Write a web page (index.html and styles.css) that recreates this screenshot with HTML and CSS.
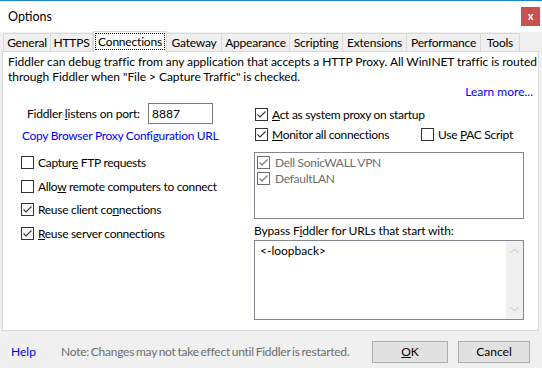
FILE: index.html
```html
<!DOCTYPE html>
<html>
<head>
    <title>Options</title>
    <link rel="stylesheet" href="styles.css">
</head>
<body>
<div class="window">
    <div class="titlebar">
        <span class="title">Options</span>
        <span class="close-btn">x</span>
    </div>

    <div class="tabs">
        <span class="tab">General</span>
        <span class="tab">HTTPS</span>
        <span class="tab active"><span class="focus">Connections</span></span>
        <span class="tab">Gateway</span>
        <span class="tab">Appearance</span>
        <span class="tab">Scripting</span>
        <span class="tab">Extensions</span>
        <span class="tab">Performance</span>
        <span class="tab">Tools</span>
    </div>

    <div class="panel">
        <p class="intro">Fiddler can debug traffic from any application that accepts a HTTP Proxy. All WinINET traffic is routed<br>through Fiddler when "File &gt; Capture Traffic" is checked.</p>
        <div class="learn-row"><a class="link">Learn more...</a></div>

        <div class="columns">
            <div class="left-col">
                <div class="port-row">
                    <span>Fiddler <u>l</u>istens on port:</span>
                    <span class="port-input">8887</span>
                </div>
                <a class="link copy-link">Copy Browser Proxy Configuration URL</a>

                <div class="check-list">
                    <div class="check">
                        <svg class="box" width="13" height="13"><rect x="0.5" y="0.5" width="12" height="12" fill="#fff" stroke="#333"/></svg>
                        <span>Captur<u>e</u> FTP requests</span>
                    </div>
                    <div class="check">
                        <svg class="box" width="13" height="13"><rect x="0.5" y="0.5" width="12" height="12" fill="#fff" stroke="#333"/></svg>
                        <span>Allo<u>w</u> remote computers to connect</span>
                    </div>
                    <div class="check">
                        <svg class="box" width="13" height="13"><rect x="0.5" y="0.5" width="12" height="12" fill="#fff" stroke="#333"/><polyline points="2.5,6.5 5,9 10.5,3.5" fill="none" stroke="#333" stroke-width="1.1"/></svg>
                        <span>Reuse client co<u>n</u>nections</span>
                    </div>
                    <div class="check">
                        <svg class="box" width="13" height="13"><rect x="0.5" y="0.5" width="12" height="12" fill="#fff" stroke="#333"/><polyline points="2.5,6.5 5,9 10.5,3.5" fill="none" stroke="#333" stroke-width="1.1"/></svg>
                        <span><u>R</u>euse server connections</span>
                    </div>
                </div>
            </div>

            <div class="right-col">
                <div class="check act-row">
                    <svg class="box" width="13" height="13"><rect x="0.5" y="0.5" width="12" height="12" fill="#fff" stroke="#333"/><polyline points="2.5,6.5 5,9 10.5,3.5" fill="none" stroke="#333" stroke-width="1.1"/></svg>
                    <span><u>A</u>ct as system proxy on startup</span>
                </div>
                <div class="monitor-row">
                    <div class="check">
                        <svg class="box" width="13" height="13"><rect x="0.5" y="0.5" width="12" height="12" fill="#fff" stroke="#333"/><polyline points="2.5,6.5 5,9 10.5,3.5" fill="none" stroke="#333" stroke-width="1.1"/></svg>
                        <span><u>M</u>onitor all connections</span>
                    </div>
                    <div class="check">
                        <svg class="box" width="13" height="13"><rect x="0.5" y="0.5" width="12" height="12" fill="#fff" stroke="#333"/></svg>
                        <span>Use <u>P</u>AC Script</span>
                    </div>
                </div>

                <div class="conn-list">
                    <div class="check list-item">
                        <svg class="box" width="13" height="13"><rect x="0.5" y="0.5" width="12" height="12" fill="#fff" stroke="#6d6d6d"/><polyline points="2.5,6.5 5,9 10.5,3.5" fill="none" stroke="#6d6d6d" stroke-width="1.1"/></svg>
                        <span>Dell SonicWALL VPN</span>
                    </div>
                    <div class="check list-item">
                        <svg class="box" width="13" height="13"><rect x="0.5" y="0.5" width="12" height="12" fill="#fff" stroke="#6d6d6d"/><polyline points="2.5,6.5 5,9 10.5,3.5" fill="none" stroke="#6d6d6d" stroke-width="1.1"/></svg>
                        <span>DefaultLAN</span>
                    </div>
                </div>

                <div class="bypass-label">Bypass F<u>i</u>ddler for URLs that start with:</div>
                <div class="bypass-box">
                    <div class="bypass-text">&lt;-loopback&gt;</div>
                    <div class="scrollbar">
                        <svg width="9" height="6"><polyline points="0.5,5 4.5,1 8.5,5" fill="none" stroke="#c2c2c2"/></svg>
                        <svg width="9" height="6"><polyline points="0.5,1 4.5,5 8.5,1" fill="none" stroke="#c2c2c2"/></svg>
                    </div>
                </div>
            </div>
        </div>
    </div>

    <div class="footer">
        <a class="link help-link">Help</a>
        <span class="note">Note: Changes may not take effect until Fiddler is restarted.</span>
        <button class="btn ok-btn" type="button"><u>O</u>K</button>
        <button class="btn cancel-btn" type="button">Cancel</button>
    </div>
</div>
</body>
</html>
```

FILE: styles.css
```css
* {
    box-sizing: border-box;
}

body {
    margin: 0;
    width: 542px;
    height: 368px;
    overflow: hidden;
    background-color: #f0f0f0;
    font-family: Lato, "Noto Sans", sans-serif;
    font-size: 12px;
    color: #000;
}

.window {
    height: 368px;
    border-top: 1px solid #1883d7;
    display: flex;
    flex-direction: column;
}

.titlebar {
    height: 31px;
    background: white;
    display: flex;
    align-items: center;
    justify-content: space-between;
    padding: 0 2px 0 8px;
}

.title {
    font-size: 12.5px;
}

.close-btn {
    width: 19px;
    height: 19px;
    background: #c75050;
    color: white;
    font-weight: bold;
    font-size: 11px;
    line-height: 17px;
    text-align: center;
}

/* tab strip */
.tabs {
    display: flex;
    align-items: flex-end;
    height: 19px;
    padding-left: 3px;
}

.tab {
    height: 18px;
    line-height: 17px;
    border: 1px solid #d9d9d9;
    border-bottom: none;
    margin-left: -1px;
    background: #f0f0f0;
    text-align: center;
    white-space: nowrap;
    letter-spacing: -0.2px;
}

.tab:nth-child(1) { width: 48px; margin-left: 0; }
.tab:nth-child(2) { width: 43px; }
.tab:nth-child(3) { width: 74px; }
.tab:nth-child(4) { width: 56px; }
.tab:nth-child(5) { width: 69px; }
.tab:nth-child(6) { width: 54px; }
.tab:nth-child(7) { width: 65px; }
.tab:nth-child(8) { width: 75px; }
.tab:nth-child(9) { width: 40px; }

.tab.active {
    height: 21px;
    margin: 0 0 -1px 0;
    padding: 1px 1px 0 1px;
    background: white;
    position: relative;
    z-index: 1;
}

.focus {
    display: block;
    height: 17px;
    line-height: 15px;
    border: 1px dotted #000;
}

/* main panel */
.panel {
    height: 280px;
    margin: 0 3px 0 2px;
    background: white;
    border: 1px solid #d9d9d9;
    padding: 2px 5px 0 5px;
}

.intro {
    margin: 0;
    line-height: 15px;
    white-space: nowrap;
    letter-spacing: -0.05px;
}

.learn-row {
    line-height: 15px;
    text-align: right;
}

.link {
    color: #0000ff;
    cursor: pointer;
}

.columns {
    display: grid;
    grid-template-columns: 246px 270px;
}

.left-col {
    padding-left: 13px;
}

.port-row {
    display: flex;
    align-items: center;
    margin-top: 4px;
    height: 21px;
    padding-left: 6px;
    letter-spacing: -0.2px;
}

.port-input {
    width: 65px;
    height: 21px;
    margin-left: auto;
    margin-right: 41px;
    border: 1px solid #7a7a7a;
    padding: 0 3px;
    line-height: 19px;
    letter-spacing: 0;
}

.copy-link {
    display: block;
    margin-top: 4px;
    margin-left: 1px;
    line-height: 15px;
    letter-spacing: -0.3px;
}

.check-list {
    display: flex;
    flex-direction: column;
    gap: 8.7px;
    margin-top: 12px;
}

.check {
    display: flex;
    align-items: center;
    height: 15px;
    line-height: 15px;
    white-space: nowrap;
    letter-spacing: -0.3px;
}

.box {
    flex: none;
    margin-right: 4px;
}

.right-col {
    display: flex;
    flex-direction: column;
}

.act-row {
    margin-top: 8px;
    padding-left: 1px;
}

.monitor-row {
    display: flex;
    margin-top: 5px;
    padding-left: 1px;
}

.monitor-row .check:first-child {
    width: 166px;
}

.conn-list {
    height: 67px;
    margin-top: 10px;
    border: 1px solid #828790;
    padding: 1px 2px;
}

.list-item {
    height: 16px;
    color: #6d6d6d;
}

.list-item .box {
    margin-right: 5px;
}

.bypass-label {
    line-height: 15px;
    margin-top: 4px;
    letter-spacing: -0.15px;
}

.bypass-box {
    display: flex;
    height: 80px;
    margin-top: 2px;
    border: 1px solid #828790;
}

.bypass-text {
    flex: 1;
    padding: 2px 5px;
    line-height: 15px;
}

.scrollbar {
    width: 17px;
    background: #f0f0f0;
    display: flex;
    flex-direction: column;
    justify-content: space-between;
    align-items: center;
    padding: 7px 0;
}

/* bottom bar */
.footer {
    flex: 1;
    display: flex;
    align-items: center;
    padding: 4px 12px 0 11px;
}

.help-link {
    width: 50px;
}

.note {
    flex: 1;
    color: #6d6d6d;
    white-space: nowrap;
    letter-spacing: -0.25px;
    word-spacing: -1px;
}

.btn {
    height: 22px;
    font-family: inherit;
    font-size: 12px;
    background: #e1e1e1;
    border: 1px solid #adadad;
    padding: 0;
    color: #000;
}

.ok-btn {
    width: 76px;
    margin-right: 10px;
}

.cancel-btn {
    width: 72px;
}
```
